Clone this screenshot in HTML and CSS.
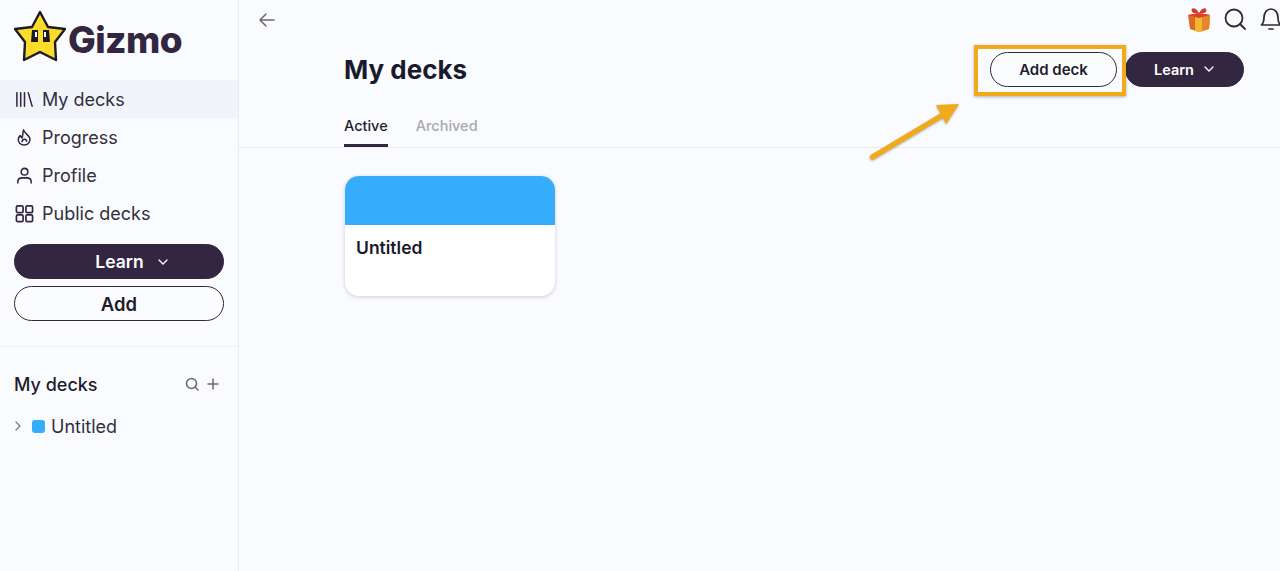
FILE: index.html
```html
<!DOCTYPE html>
<html lang="en">
<head>
  <meta charset="UTF-8" />
  <title>Gizmo - My decks</title>
  <link rel="stylesheet" href="styles.css">
</head>
<body>
  <div class="app">
    <aside class="sidebar">
      <div class="logo">
        <svg class="star" width="54" height="52" viewBox="0 0 54 52">
          <path d="M27 2 L35 17 L52 19 L42 32 L43 50 L27 42 L11 50 L12 32 L2 19 L19 17 Z" fill="#fbdc2a" stroke="#1d1a22" stroke-width="2.4" stroke-linejoin="round"/>
          <path d="M19 20 h6 v12 h-7 z M30 20 h6 l1 12 h-7 z" fill="#1d1a22"/>
          <path d="M22 22 h2 v5 h-2 z M31 22 h2 v5 h-2 z" fill="#fff"/>
        </svg>
        <span class="logo-text">Gizmo</span>
      </div>

      <nav class="nav">
        <a class="nav-item active">
          <svg class="nav-icon" viewBox="0 0 20 20" fill="none" stroke="#332640" stroke-width="1.6" stroke-linecap="round"><path d="M2 3v14M6 3v14M10 3v14M14 3l4 14"/></svg>
          My decks
        </a>
        <a class="nav-item">
          <svg class="nav-icon" viewBox="0 0 20 20" fill="none" stroke="#332640" stroke-width="1.6" stroke-linejoin="round" stroke-linecap="round"><path d="M9 2c1 3.500 5 5 6.500 8.500 1 3-1 7.500-5.500 7.500S3 15 3.500 11.500c.2-1.500 1-2.500 2-3.500 .5 1.500 1 2 2 2.500 .8-2.500.5-5.500 1.500-8.500z"/><path d="M7.500 14.500a2.700 2.700 0 0 1 2.700-2.700c1 0 2 1 2 2.200"/></svg>
          Progress
        </a>
        <a class="nav-item">
          <svg class="nav-icon" viewBox="0 0 20 20" fill="none" stroke="#332640" stroke-width="1.6" stroke-linecap="round"><circle cx="10" cy="6" r="3.500"/><path d="M3 18v-1.500C3 14 5 12.500 7.500 12.500h5c2.500 0 4.500 1.500 4.500 4V18"/></svg>
          Profile
        </a>
        <a class="nav-item">
          <svg class="nav-icon" viewBox="0 0 20 20" fill="none" stroke="#332640" stroke-width="1.8"><rect x="1.500" y="2" width="7" height="7" rx="1.500"/><rect x="11.500" y="2" width="7" height="7" rx="1.500"/><rect x="1.500" y="11.500" width="7" height="7" rx="1.500"/><rect x="11.500" y="11.500" width="7" height="7" rx="1.500"/></svg>
          Public decks
        </a>
      </nav>

      <div class="side-buttons">
        <button class="btn btn-dark btn-wide btn-side-learn">Learn
          <svg class="chevron" width="12" height="12" viewBox="0 0 12 12" fill="none" stroke="#fff" stroke-width="1.300" stroke-linecap="round"><path d="M2 4l4 4 4-4"/></svg>
        </button>
        <button class="btn btn-light btn-wide btn-side-add">Add</button>
      </div>

      <div class="side-decks">
        <div class="side-decks-head">
          <span>My decks</span>
          <span class="side-tools">
            <svg width="14" height="14" viewBox="0 0 14 14" fill="none" stroke="#6e6a72" stroke-width="1.600" stroke-linecap="round"><circle cx="6.500" cy="6.500" r="5"/><path d="M10 10l3 3"/></svg>
            <svg width="12" height="12" viewBox="0 0 12 12" fill="none" stroke="#6e6a72" stroke-width="1.500" stroke-linecap="round"><path d="M6 1v10M1 6h10"/></svg>
          </span>
        </div>
        <div class="deck-row">
          <svg width="8" height="10" viewBox="0 0 8 10" fill="none" stroke="#77737b" stroke-width="1.200" stroke-linecap="round"><path d="M2 1l4 4-4 4"/></svg>
          <span class="deck-dot"></span>
          Untitled
        </div>
      </div>
    </aside>

    <main class="main">
      <div class="topbar">
        <svg class="back" width="16" height="14" viewBox="0 0 16 14" fill="none" stroke="#6b676c" stroke-width="1.500" stroke-linecap="round" stroke-linejoin="round"><path d="M15 7H1M7 1L1 7l6 6"/></svg>
        <div class="top-icons">
          <svg width="26" height="27" viewBox="0 0 26 27">
            <path d="M2 9l11-2 11 2-1 14-10 3-9-3z" fill="#dc6a22"/>
            <path d="M13 8l11 1-1 14-10 3z" fill="#e8872a"/>
            <path d="M9 8h7v18l-3 0-4-1z" fill="#f2b632"/>
            <path d="M2 9l11-2 11 2-11 3z" fill="#d9412f"/>
            <path d="M13 7C9 0 4 2 6 6c1 1.500 5 1.500 7 1zM13 7c4-7 9-5 7-1-1 1.500-5 1.500-7 1z" fill="#d63a34"/>
          </svg>
          <svg width="22" height="22" viewBox="0 0 22 22" fill="none" stroke="#2d2a30" stroke-width="1.800" stroke-linecap="round"><circle cx="10" cy="10" r="8.500"/><path d="M16 16l5 5"/></svg>
          <svg class="bell" width="22" height="24" viewBox="0 0 22 24" fill="none" stroke="#2d2a30" stroke-width="1.700" stroke-linecap="round" stroke-linejoin="round"><path d="M1.500 18h19c-2-2-2.500-3.500-2.500-7.500C18 5.500 15 2 11 2S4 5.500 4 10.500c0 4-.5 5.500-2.500 7.500zM9 22h4"/></svg>
        </div>
      </div>

      <div class="page-head">
        <h1>My decks</h1>
        <div class="head-actions">
          <button class="btn btn-light btn-add">Add deck</button>
          <button class="btn btn-dark btn-learn">Learn
            <svg class="chevron" width="12" height="12" viewBox="0 0 12 12" fill="none" stroke="#fff" stroke-width="1.300" stroke-linecap="round"><path d="M2 4l4 4 4-4"/></svg>
          </button>
        </div>
      </div>

      <div class="tabs">
        <span class="tab tab-active">Active</span>
        <span class="tab">Archived</span>
      </div>

      <div class="deck-grid">
        <div class="deck-card">
          <div class="deck-cover"></div>
          <div class="deck-title">Untitled</div>
        </div>
      </div>

      <!-- annotation on top of the screenshot -->
      <div class="mark-box"></div>
      <svg class="mark-arrow" width="100" height="64" viewBox="0 0 100 64">
        <path d="M3.500 57L72 16" stroke="#f0aa1c" stroke-width="5.500" stroke-linecap="round"/>
        <path d="M90 4L67 5L77 24Z" fill="#f0aa1c"/>
      </svg>
    </main>
  </div>
</body>
</html>
```

FILE: styles.css
```css
* {
  box-sizing: border-box;
}
html, body {
  height: 100%;
}
body {
  margin: 0;
  font-family: Inter, "Noto Sans", Arial, sans-serif;
  background-color: #f9fbff;
  color: #1f1c2b;
  overflow: hidden;
}
.app {
  display: flex;
  height: 571px;
}
.sidebar {
  width: 239px;
  flex-shrink: 0;
  border-right: 1px solid #e9edf2;
}
.logo {
  display: flex;
  align-items: center;
  height: 80px;
  padding: 0 0 8px 13px;
  gap: 1px;
}
.logo-text {
  margin-top: 6px;
  font-size: 37px;
  font-weight: 800;
  letter-spacing: -0.6px;
  color: #332640;
}
.nav-item {
  display: flex;
  align-items: center;
  gap: 8px;
  height: 38.250px;
  padding-left: 15px;
  font-size: 18px;
  color: #332f3d;
}
.nav-item.active {
  background: #f1f4fa;
}
.nav-icon {
  width: 19px;
  height: 19px;
}
.side-buttons {
  display: flex;
  flex-direction: column;
  gap: 7px;
  padding: 11px 14px 25px;
  border-bottom: 1px solid #edf0f4;
}
.btn {
  display: inline-flex;
  align-items: center;
  justify-content: center;
  height: 35px;
  border-radius: 18px;
  border: 1.500px solid #332640;
  font-family: inherit;
  font-size: 16px;
  font-weight: 600;
  cursor: pointer;
}
.btn-dark {
  background: #332640;
  color: #fff;
}
.btn-light {
  background: #fbfcff;
  color: #1f1c2b;
}
.btn-wide {
  width: 210px;
}
.btn-side-learn {
  padding-left: 32px;
  font-size: 17.500px;
}
.btn-side-learn .chevron {
  margin-left: 13px;
}
.btn-side-add {
  font-size: 18.500px;
}
.chevron {
  margin-left: 10px;
}
.side-decks {
  padding: 26px 14px 0;
}
.side-decks-head {
  display: flex;
  justify-content: space-between;
  align-items: center;
  font-size: 18px;
  font-weight: 500;
  height: 22px;
}
.side-tools {
  display: flex;
  align-items: center;
  gap: 8px;
  padding-right: 5px;
}
.deck-row {
  display: flex;
  align-items: center;
  margin-top: 20px;
  font-size: 18px;
  color: #332f3d;
  height: 22px;
}
.deck-dot {
  width: 13px;
  height: 13px;
  margin: 0 6px 0 10px;
  border-radius: 3px;
  background: #36adfb;
}
.main {
  position: relative;
  flex: 1;
  min-width: 0;
}
.topbar {
  display: flex;
  justify-content: space-between;
  align-items: center;
  height: 38px;
  padding: 2px 0 0 20px;
}
.top-icons {
  display: flex;
  align-items: center;
  gap: 12px;
  margin: 0 -2px 2px 0;
}
.bell {
  margin-left: 2px;
}
.page-head {
  display: flex;
  justify-content: space-between;
  align-items: center;
  height: 62px;
  padding: 0 36px 0 105px;
}
h1 {
  margin: 0;
  font-size: 26px;
  font-weight: 700;
  color: #1a1a2e;
}
.head-actions {
  display: flex;
  gap: 8px;
}
.btn-add {
  width: 127px;
  font-size: 15px;
}
.btn-learn {
  width: 119px;
  padding-right: 6px;
  font-size: 14.500px;
}
.btn-learn .chevron {
  margin-left: 9px;
}
.tabs {
  display: flex;
  gap: 28px;
  height: 48px;
  padding: 17px 0 0 105px;
  border-bottom: 1px solid #e9edf2;
}
.tab {
  height: 30px;
  font-size: 14.500px;
  font-weight: 500;
  color: #a9a8ae;
}
.tab-active {
  color: #1f1c2b;
  border-bottom: 3px solid #332640;
}
.deck-grid {
  padding: 28px 0 0 106px;
}
.deck-card {
  width: 210px;
  height: 120px;
  background: #fff;
  border-radius: 14px;
  overflow: hidden;
  box-shadow: 0 1px 4px rgba(30, 30, 50, 0.2);
}
.deck-cover {
  height: 49px;
  background: #36adfb;
}
.deck-title {
  padding: 12px 11px;
  font-size: 17.500px;
  font-weight: 600;
  color: #1a1a2e;
}
.mark-box {
  position: absolute;
  left: 735px;
  top: 45px;
  width: 152px;
  height: 51px;
  border: 4px solid #f0aa1c;
  box-shadow: 0 1px 3px rgba(0, 0, 0, 0.3);
}
.mark-arrow {
  position: absolute;
  left: 630px;
  top: 100px;
  filter: drop-shadow(0 1px 1px rgba(0, 0, 0, 0.3));
}
```
